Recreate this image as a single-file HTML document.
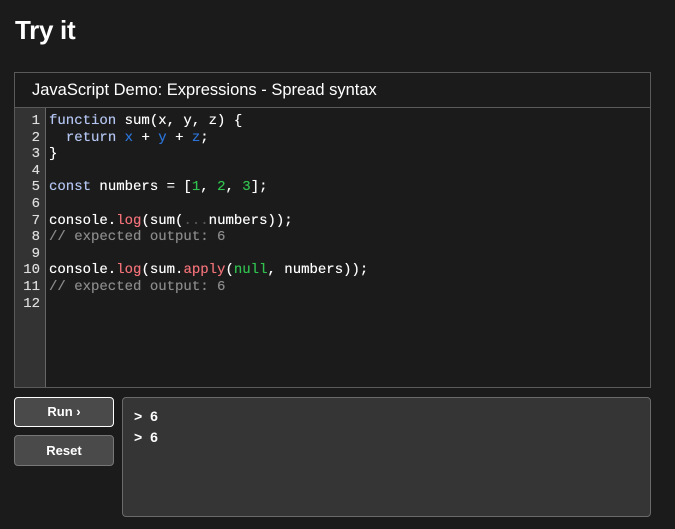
<!DOCTYPE html>
<html><head><style>
body{margin:0;background:#1b1b1b;width:675px;height:529px;overflow:hidden;font-family:"Liberation Sans",sans-serif;color:#fff;position:relative}
h1{position:absolute;left:15px;top:15px;margin:0;font-size:26px;font-weight:bold;letter-spacing:-0.3px}
.panel{position:absolute;left:14px;top:72px;width:635px;height:314px;border:1px solid #5a5a5a;background:#1b1b1b}
.hd{height:34px;border-bottom:1px solid #5a5a5a;font-size:16.5px;line-height:35px;padding-left:17px}
.gut{position:absolute;left:0;top:35px;width:30px;bottom:0;background:#333;border-right:1px solid #666}
pre{margin:0;font-family:"Liberation Mono",monospace;font-size:14px;line-height:16.6px;position:absolute;top:40px;text-shadow:0 0 0.4px currentColor}
.ln{left:0;width:25px;text-align:right;color:#ddd}
.cd{left:34px;color:#fff}
.k{color:#b3c4f0}.v{color:#2b73d6}.n{color:#31c04f}.f{color:#f07178}.c{color:#8a8a8a}.d{color:#555}
.btn{position:absolute;left:14px;width:98px;height:29px;background:#4a4a4a;border:1px solid #777;border-radius:4px;font-size:13px;font-weight:bold;text-align:center;line-height:29px}
.out{position:absolute;left:122px;top:397px;width:527px;height:118px;background:#353535;border:1px solid #6a6a6a;border-radius:4px;font-family:"Liberation Sans",sans-serif;font-size:14px;font-weight:bold}
</style></head><body>
<h1>Try it</h1>
<div class="panel">
<div class="hd">JavaScript Demo: Expressions - Spread syntax</div>
<div class="gut"></div>
<pre class="ln">1
2
3
4
5
6
7
8
9
10
11
12</pre>
<pre class="cd"><span class="k">function</span> sum(x, y, z) {
  <span class="k">return</span> <span class="v">x</span> + <span class="v">y</span> + <span class="v">z</span>;
}

<span class="k">const</span> numbers = [<span class="n">1</span>, <span class="n">2</span>, <span class="n">3</span>];

console.<span class="f">log</span>(sum(<span class="d">...</span>numbers));
<span class="c">// expected output: 6</span>

console.<span class="f">log</span>(sum.<span class="f">apply</span>(<span class="n">null</span>, numbers));
<span class="c">// expected output: 6</span>
</pre>
</div>
<div class="btn" style="top:397px;border:1.5px solid #fff;height:28px;line-height:28px">Run ›</div>
<div class="btn" style="top:435px">Reset</div>
<div class="out"><div style="position:absolute;left:11px;top:8px;line-height:21px;word-spacing:4px">&gt; 6<br>&gt; 6</div></div>
</body></html>
